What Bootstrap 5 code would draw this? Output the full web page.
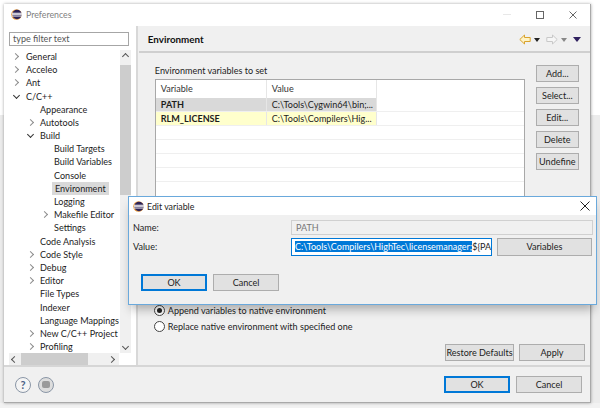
<!DOCTYPE html>
<html lang="en">
<head>
<meta charset="utf-8">
<title>Preferences</title>
<link rel="stylesheet" href="https://cdn.jsdelivr.net/npm/bootstrap@5.3.0/dist/css/bootstrap.min.css">
<style>
html,body{margin:0;height:408px;overflow:hidden}
body{background:#fff;font-family:Lato,"Open Sans",sans-serif;font-size:9.05px;line-height:13px;color:#1c1c1c;position:relative}
.desk-side{position:absolute;background:#ececec}
.desk-l{left:0;top:115px;width:4px;height:293px}
.desk-r{left:591px;top:115px;width:9px;height:293px}
.desk-b{left:0;top:403px;width:600px;height:5px;background:#f2f2f2}
.win{position:absolute;left:4px;top:4px;width:587px;height:399px;background:#f0f0f0;border:1px solid #a9a9a9;border-width:0 1px 1px 0;box-shadow:0 0 3px rgba(0,0,0,.35)}
.tbar{height:22px;background:#fff;padding-left:7px;color:#7f7f7f;font-size:8.8px}
.tbar svg{margin-right:4px}
.wctl{margin-left:auto;padding-right:13px;gap:25px}
.tbar .wctl svg{margin-right:0}
.mainrow{height:340px}
.lpane{width:134px;background:#fff;border-right:2px solid #d8d8d8;position:relative}
.filter{margin:6px 7px 0 5px;height:14px;border:1px solid #a6a6a6;padding:0 3px;line-height:12px;color:#555;background:#fff}
.treewrap{height:303px;margin-top:4px}
.tree{width:110px;padding:0;overflow:hidden;margin:0 0 0 5px;list-style:none}
.tree li{height:13.2px;line-height:13.2px;white-space:nowrap;position:relative}
.tree .l0{padding-left:17px}
.tree .l1{padding-left:31px}
.tree .l2{padding-left:45px}
.tree .sel span{background:#d9d9d9;padding:0 3px;margin-left:-2px;display:inline-block;height:13px;line-height:13px}
.tw{position:absolute;top:4px;width:5px;height:5px;border-style:solid;border-color:#8c8c8c;border-width:1px 1px 0 0;transform:rotate(45deg)}
.tw.open{transform:rotate(135deg);border-color:#333;top:3px}
.t0{left:4px}.t1{left:19px}.t2{left:33px}.o0{left:5px}.o1{left:19px}
.vbar{width:11px;background:#f0f0f0;margin-left:auto;margin-right:5px;height:303px;position:relative}
.vthumb{background:#cdcdcd;height:130px;margin-top:6px}
.sarrow{width:5px;height:5px;border-style:solid;border-color:#555;border-width:1.5px 1.5px 0 0;display:block}
.vup{transform:rotate(-45deg);margin:4px auto 0}
.vdn{transform:rotate(135deg);position:absolute;left:3px;top:294px}
.hbar{height:12px;background:#f0f0f0;margin:0 0 0 5px;position:relative;width:110px}
.hthumb{position:absolute;left:12px;top:0;width:67px;height:12px;background:#cdcdcd}
.hl{position:absolute;left:3px;top:4px;transform:rotate(-135deg)}
.hr{position:absolute;left:100px;top:4px;transform:rotate(45deg)}
.rpane{width:452px;position:relative;margin-left:1px}
.rhead{height:27px;padding:3px 9px 0 9px;background:#f0f0f0;border-bottom:2px solid #cfcfcf}
.rhead b{font-size:9.8px;color:#111}
.navic{gap:2px}
.drop{width:0;height:0;border-left:3.5px solid transparent;border-right:3.5px solid transparent;border-top:4px solid #222;margin:0 3.5px 0 1.5px}
.drop.gr{border-top-color:#888;margin-right:4px}
.drop.pu{border-left-width:4.5px;border-right-width:4.5px;border-top:5px solid #30205f;margin:0}
.rbody{padding:11px 7px 0 16px;height:291px}
.tblwrap{width:370px}
.lbl{height:13px;margin-bottom:2px;line-height:13px}
.vtable{width:370px;height:215px;background:#fff;border:1px solid #a8a8a8;border-width:1px 1px 0 1px}
.trow{height:14px;line-height:13px;border-bottom:1px solid #efefef;display:flex}
.trow.hd{height:18px;line-height:17px;border-bottom:0;color:#333}
.cel{padding-left:5px;white-space:nowrap;overflow:hidden}
.c1{width:111px;border-right:1px solid #e6e6e6}
.c2{width:110px;border-right:1px solid #e6e6e6}
.rgray .c1,.rgray .c2{background:#d9d9d9}
.ryel .c1,.ryel .c2{background:#ffffcc}
.btnw{appearance:none;background:#e1e1e1;border:1px solid #adadad;color:#222;font-size:9.05px;line-height:13px;padding:0;border-radius:0;height:17px;text-align:center;white-space:nowrap}
.btnw.def{border:2px solid #0078d7;line-height:11px}
.sidebtns{width:43px;gap:5px;margin-left:11px;margin-top:1px}
.sidebtns .btnw{width:43px}
.radios{position:absolute;left:15px;top:277px}
.radrow{height:16px;gap:3px}
.rad{width:11px;height:11px;border:1px solid #444;border-radius:50%;background:#fff;display:inline-block;position:relative}
.rad.on::after{content:"";position:absolute;left:2px;top:2px;width:5px;height:5px;background:#222;border-radius:50%}
.rbtns{position:absolute;right:5px;top:318px;gap:5px}
.rd{width:69px}.ap{width:66px}
.foot{height:37px;border-top:2px solid #d6d6d6;padding:0 8px 0 11px}
.circ{width:16px;height:16px;border-radius:50%;border:1.5px solid #8a96a6;display:flex;align-items:center;justify-content:center;font-weight:700;color:#4a5f85;font-size:11px;background:#f4f4f4;margin-right:7px}
.circ2{background:#ddd}
.circ2 i{width:8px;height:7px;background:#9a9a9a;border-radius:2px;display:block}
.dlg{position:absolute;left:128px;top:196px;width:469px;height:109px;background:#f0f0f0;border:1px solid #6aa9dc;box-shadow:0 7px 10px -3px rgba(0,0,0,.3)}
.dtitle{height:18px;background:#fff;padding-left:4px;color:#222;font-size:8.8px}
.dtitle>svg:first-child{margin-right:3px}
.dclose{margin-right:6px}
.dbody{padding:3px 3px 0 4px}
.drow{height:19px}
.dname{width:158px;flex:none}
.dro{width:302px;height:15px;border:1px solid #d0d0d0;background:#f0f0f0;padding-left:4px;color:#777;line-height:13px}
.dval{width:201px;height:18px;border:1px solid #0078d7;background:#fff;padding:1px 0 0 3px;white-space:nowrap;overflow:hidden;line-height:14px;font-size:9px;flex:none}
.dval mark{padding:0;background:#0078d7;color:#fff}
.dbtn{width:95px;margin-left:5px;height:18px}
.dacts{gap:6px;padding-left:12px;margin-top:18px}
.dacts .btnw,.facts .btnw{width:66px}
.facts{gap:6px}
</style>
</head>
<body>
<div class="desk-side desk-l"></div><div class="desk-side desk-r"></div><div class="desk-side desk-b"></div>
<div class="win d-flex flex-column">
  <div class="tbar d-flex align-items-center">
    <svg width="11" height="11" viewBox="0 0 22 22"><circle cx="11" cy="11" r="10.5" fill="#e89a3c"/><circle cx="12" cy="11" r="9.5" fill="#2c2255"/><rect x="2" y="7.5" width="20" height="2" fill="#fff"/><rect x="2" y="10.5" width="20" height="2" fill="#fff"/><rect x="2" y="13.5" width="20" height="1.5" fill="#fff"/></svg>
    <span>Preferences</span>
    <div class="wctl d-flex align-items-center">
      <svg width="8" height="1" viewBox="0 0 8 1"><rect width="8" height="1" fill="#e8e8e8"/></svg>
      <svg width="8" height="8" viewBox="0 0 8 8"><rect x=".5" y=".5" width="7" height="7" fill="none" stroke="#666"/></svg>
      <svg width="8" height="8" viewBox="0 0 8 8"><path d="M.5.5l7 7M7.5.5l-7 7" stroke="#666" fill="none"/></svg>
    </div>
  </div>
  <div class="mainrow d-flex">
    <div class="lpane">
      <div class="filter">type filter text</div>
      <div class="treewrap d-flex">
        <ul class="tree">
          <li class="l0"><i class="tw t0"></i>General</li>
          <li class="l0"><i class="tw t0"></i>Acceleo</li>
          <li class="l0"><i class="tw t0"></i>Ant</li>
          <li class="l0"><i class="tw open o0"></i>C/C++</li>
          <li class="l1">Appearance</li>
          <li class="l1"><i class="tw t1"></i>Autotools</li>
          <li class="l1"><i class="tw open o1"></i>Build</li>
          <li class="l2">Build Targets</li>
          <li class="l2">Build Variables</li>
          <li class="l2">Console</li>
          <li class="l2 sel"><span>Environment</span></li>
          <li class="l2">Logging</li>
          <li class="l2"><i class="tw t2"></i>Makefile Editor</li>
          <li class="l2">Settings</li>
          <li class="l1">Code Analysis</li>
          <li class="l1"><i class="tw t1"></i>Code Style</li>
          <li class="l1"><i class="tw t1"></i>Debug</li>
          <li class="l1"><i class="tw t1"></i>Editor</li>
          <li class="l1">File Types</li>
          <li class="l1">Indexer</li>
          <li class="l1">Language Mappings</li>
          <li class="l1"><i class="tw t1"></i>New C/C++ Project</li>
          <li class="l1"><i class="tw t1"></i>Profiling</li>
        </ul>
        <div class="vbar"><i class="sarrow vup"></i><div class="vthumb"></div><i class="sarrow vdn"></i></div>
      </div>
      <div class="hbar"><i class="sarrow hl"></i><div class="hthumb"></div><i class="sarrow hr"></i></div>
    </div>
    <div class="rpane">
      <div class="rhead d-flex align-items-center justify-content-between">
        <b>Environment</b>
        <div class="navic d-flex align-items-center">
          <svg width="12" height="11" viewBox="0 0 12 11"><path d="M.8 5.5 5.5 1v2.5h5.7v4H5.500V10z" fill="#fff3c4" stroke="#d9a32e"/></svg><i class="drop"></i>
          <svg width="12" height="11" viewBox="0 0 12 11"><path d="M11.2 5.5 6.500 1v2.500H.8v4h5.700V10z" fill="#f6f6f6" stroke="#c8c8c8"/></svg><i class="drop gr"></i>
          <i class="drop pu"></i>
        </div>
      </div>
      <div class="rbody d-flex">
        <div class="tblwrap">
          <div class="lbl">Environment variables to set</div>
          <div class="vtable">
            <div class="trow hd"><div class="cel c1">Variable</div><div class="cel c2">Value</div></div>
            <div class="trow rgray"><div class="cel c1 fw-bold">PATH</div><div class="cel c2">C:\Tools\Cygwin64\bin;...</div></div>
            <div class="trow ryel"><div class="cel c1 fw-bold">RLM_LICENSE</div><div class="cel c2">C:\Tools\Compilers\Hig...</div></div>
            <div class="trow"></div><div class="trow"></div><div class="trow"></div><div class="trow"></div>
          </div>
        </div>
        <div class="sidebtns d-flex flex-column">
          <button class="btnw">Add...</button>
          <button class="btnw">Select...</button>
          <button class="btnw">Edit...</button>
          <button class="btnw">Delete</button>
          <button class="btnw">Undefine</button>
        </div>
      </div>
      <div class="radios">
        <div class="radrow d-flex align-items-center"><span class="rad on"></span><span>Append variables to native environment</span></div>
        <div class="radrow d-flex align-items-center"><span class="rad"></span><span>Replace native environment with specified one</span></div>
      </div>
      <div class="rbtns d-flex">
        <button class="btnw rd">Restore Defaults</button>
        <button class="btnw ap">Apply</button>
      </div>
    </div>
  </div>
  <div class="foot d-flex align-items-center">
    <div class="circ">?</div><div class="circ circ2"><i></i></div>
    <div class="facts d-flex ms-auto"><button class="btnw def">OK</button><button class="btnw">Cancel</button></div>
  </div>
</div>
<div class="dlg">
  <div class="dtitle d-flex align-items-center">
    <svg width="11" height="11" viewBox="0 0 22 22"><circle cx="11" cy="11" r="10.5" fill="#e89a3c"/><circle cx="12" cy="11" r="9.5" fill="#2c2255"/><rect x="2" y="7.5" width="20" height="2" fill="#fff"/><rect x="2" y="10.5" width="20" height="2" fill="#fff"/><rect x="2" y="13.5" width="20" height="1.5" fill="#fff"/></svg>
    <span>Edit variable</span>
    <svg class="ms-auto dclose" width="10" height="10" viewBox="0 0 10 10"><path d="M.5.5l9 9M9.5.5l-9 9" stroke="#222" fill="none"/></svg>
  </div>
  <div class="dbody">
    <div class="drow d-flex align-items-center"><div class="dname">Name:</div><div class="dro">PATH</div></div>
    <div class="drow d-flex align-items-center"><div class="dname">Value:</div><div class="dval"><mark>C:\Tools\Compilers\HighTec\licensemanager;</mark>${PA</div><button class="btnw dbtn">Variables</button></div>
  </div>
  <div class="dacts d-flex"><button class="btnw def">OK</button><button class="btnw">Cancel</button></div>
</div>
<script src="https://cdn.jsdelivr.net/npm/bootstrap@5.3.0/dist/js/bootstrap.bundle.min.js"></script>
</body>
</html>
